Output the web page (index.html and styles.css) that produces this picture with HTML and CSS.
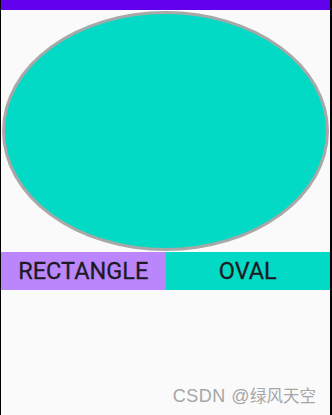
FILE: index.html
```html
<!DOCTYPE html>
<html>
<head>
<meta charset="utf-8">
<link rel="stylesheet" href="styles.css">
</head>
<body>
<div class="frame">
  <div class="topbar"></div>
  <div class="content">
    <div class="oval"></div>
    <div class="buttons">
      <div class="btn btn-rect">RECTANGLE</div>
      <div class="btn btn-oval">OVAL</div>
    </div>
    <div class="spacer"></div>
    <div class="watermark"><span class="wm-latin">CSDN @</span>绿风天空</div>
  </div>
</div>
</body>
</html>
```
FILE: styles.css
```css
html, body {
  margin: 0;
  padding: 0;
  background: #000;
}
.frame {
  width: 329px;
  height: 415px;
  margin-left: 1px;
  display: flex;
  flex-direction: column;
  background: #fafafa;
  font-family: Roboto, "Noto Sans CJK SC", sans-serif;
}
.topbar {
  height: 10px;
  background: #6200ee;
  flex: none;
}
.content {
  flex: 1;
  display: flex;
  flex-direction: column;
}
.oval {
  margin: 1px 1px 0 1px;
  height: 240px;
  box-sizing: border-box;
  border: 3.5px solid #a8a8a8;
  border-radius: 50%;
  background: #03dac5;
  flex: none;
}
.buttons {
  margin-top: 1px;
  height: 38px;
  display: flex;
  flex: none;
}
.btn {
  flex: 1;
  display: flex;
  align-items: center;
  justify-content: center;
  font-size: 23.5px;
  font-weight: 400;
  color: #1c1b23;
  -webkit-text-stroke: 0.3px #1c1b23;
}
.btn-rect {
  background: #bb86fc;
}
.btn-oval {
  background: #03dac5;
}
.spacer {
  flex: 1;
}
.watermark {
  align-self: flex-end;
  margin: 0 14px 8px 0;
  font-size: 16.5px;
  color: #a6a6a6;
  font-family: "Liberation Sans", "Noto Sans CJK SC", sans-serif;
}
.wm-latin {
  font-size: 18px;
  letter-spacing: 0.5px;
}
```
